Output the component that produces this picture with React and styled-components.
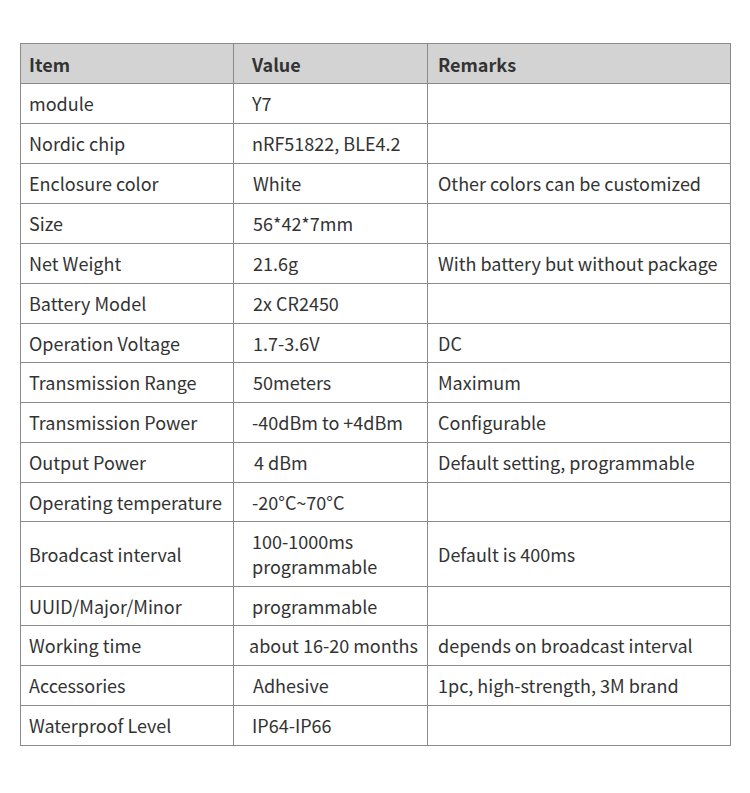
import React from 'react';
import styled, { createGlobalStyle } from 'styled-components';

const GlobalStyle = createGlobalStyle`
	body {
		margin: 0;
		background: #fff;
		font-family: "Noto Sans CJK SC", "Noto Sans", sans-serif;
	}
`;

const Page = styled.div`
	padding: 43px 20px 40px 20px;
`;

const Table = styled.table`
	width: 711px;
	border-collapse: collapse;
	table-layout: fixed;
	color: #333;
	font-size: 18px;
`;

const Th = styled.th`
	background: #d3d3d3;
	border: 1px solid #8a8a8a;
	height: 39px;
	padding: 0 0 0 ${(p) => p.$pad}px;
	text-align: left;
	font-weight: 700;
	vertical-align: middle;
`;

const Td = styled.td`
	border: 1px solid #8a8a8a;
	height: 25px;
	padding: 7px 0 ${(p) => (p.$tight ? 6 : 7)}px ${(p) => p.$pad}px;
	line-height: 25px;
	vertical-align: middle;
	font-weight: 400;
`;

// [item, value, remark, value padding, tight row]
const rows = [
	['module', 'Y7', '', 18],
	['Nordic chip', 'nRF51822, BLE4.2', '', 18],
	['Enclosure color', 'White', 'Other colors can be customized', 19],
	['Size', '56*42*7mm', '', 19],
	['Net Weight', '21.6g', 'With battery but without package', 19],
	['Battery Model', '2x CR2450', '', 19],
	['Operation Voltage', '1.7-3.6V', 'DC', 19, true],
	['Transmission Range', '50meters', 'Maximum', 19],
	['Transmission Power', '-40dBm to +4dBm', 'Configurable', 18],
	['Output Power', '4 dBm', 'Default setting, programmable', 20],
	['Operating temperature', '-20°C~70°C', '', 18, true],
	['Broadcast interval', '100-1000ms programmable', 'Default is 400ms', 18],
	['UUID/Major/Minor', 'programmable', '', 18, true],
	['Working time', 'about 16-20 months', 'depends on broadcast interval', 15],
	['Accessories', 'Adhesive', '1pc, high-strength, 3M brand', 19],
	['Waterproof Level', 'IP64-IP66', '', 18],
];

export default function App() {
	return (
		<Page>
			<GlobalStyle />
			<Table>
				<colgroup>
					<col style={{ width: 213 }} />
					<col style={{ width: 194 }} />
					<col style={{ width: 303 }} />
				</colgroup>
				<thead>
					<tr>
						<Th $pad={8}>Item</Th>
						<Th $pad={18}>Value</Th>
						<Th $pad={10}>Remarks</Th>
					</tr>
				</thead>
				<tbody>
					{rows.map(([item, value, remark, pad, tight]) => (
						<tr key={item}>
							<Td $pad={8} $tight={tight}>{item}</Td>
							<Td $pad={pad} $tight={tight}>{value}</Td>
							<Td $pad={10} $tight={tight}>{remark}</Td>
						</tr>
					))}
				</tbody>
			</Table>
		</Page>
	);
}
